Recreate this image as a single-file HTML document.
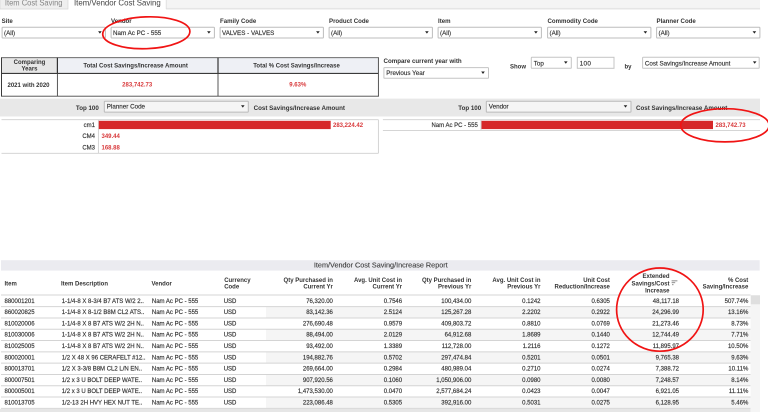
<!DOCTYPE html>
<html lang="en"><head><meta charset="utf-8"><title>Item/Vendor Cost Saving</title>
<style>
html,body{margin:0;padding:0;background:#fff;overflow:hidden;width:768px;height:412px}
#wrap{position:absolute;left:0;top:0;width:768px;height:412px;overflow:hidden;background:#fff}
#stage{position:absolute;left:0;top:0;width:1538px;height:826px;transform:translate(-0.5px,-0.5px) scale(0.5);transform-origin:0 0;will-change:transform;background:#fff}
svg{position:absolute;left:1px;top:1px}
svg{display:block;font-family:'Liberation Sans',Arial,sans-serif}
text{white-space:pre}
</style></head><body>
<div id="wrap"><div id="stage">
<svg width="1536" height="824" viewBox="0 0 768 412">
<rect x="0" y="0" width="760" height="9.2" fill="#f4f4f4"/>
<line x1="166" y1="8.7" x2="760" y2="8.7" stroke="#e5e5e5" stroke-width="1.7"/>
<rect x="0" y="-1" width="68" height="10" fill="#efefef" stroke="#d8d8d8" stroke-width="0.8"/>
<rect x="68.4" y="-1" width="97.6" height="10.5" fill="#fff"/>
<line x1="166.2" y1="0" x2="166.2" y2="9" stroke="#dcdcdc" stroke-width="0.8"/>
<text x="4.9" y="5.7" font-size="8" fill="#858585" textLength="57.6" lengthAdjust="spacingAndGlyphs">Item Cost Saving</text>
<text x="74" y="5.7" font-size="8" fill="#444" textLength="86.7" lengthAdjust="spacingAndGlyphs">Item/Vendor Cost Saving</text>
<text x="1.6" y="23" font-size="6.1" font-weight="700" fill="#333">Site</text>
<rect x="2.1" y="27.3" width="103.3" height="10.7" fill="#fff" stroke="#bcbcbc" stroke-width="1" rx="0.6"/>
<text x="4.0" y="34.75" font-size="6.25" stroke="#333" stroke-width="0.16" fill="#333">(All)</text>
<path d="M98.10 31.25h3.6l-1.80 2.4z" fill="#222"/>
<text x="111" y="23" font-size="6.1" font-weight="700" fill="#333">Vendor</text>
<rect x="111.1" y="27.3" width="103.3" height="10.7" fill="#fff" stroke="#bcbcbc" stroke-width="1" rx="0.6"/>
<text x="113.0" y="34.75" font-size="6.25" stroke="#333" stroke-width="0.16" fill="#333">Nam Ac PC - 555</text>
<path d="M207.10 31.25h3.6l-1.80 2.4z" fill="#222"/>
<text x="220" y="23" font-size="6.1" font-weight="700" fill="#333">Family Code</text>
<rect x="220.1" y="27.3" width="103.3" height="10.7" fill="#fff" stroke="#bcbcbc" stroke-width="1" rx="0.6"/>
<text x="222.0" y="34.75" font-size="6.25" stroke="#333" stroke-width="0.16" fill="#333">VALVES - VALVES</text>
<path d="M316.10 31.25h3.6l-1.80 2.4z" fill="#222"/>
<text x="329" y="23" font-size="6.1" font-weight="700" fill="#333">Product Code</text>
<rect x="329.1" y="27.3" width="103.3" height="10.7" fill="#fff" stroke="#bcbcbc" stroke-width="1" rx="0.6"/>
<text x="331.0" y="34.75" font-size="6.25" stroke="#333" stroke-width="0.16" fill="#333">(All)</text>
<path d="M425.10 31.25h3.6l-1.80 2.4z" fill="#222"/>
<text x="438" y="23" font-size="6.1" font-weight="700" fill="#333">Item</text>
<rect x="438.1" y="27.3" width="103.3" height="10.7" fill="#fff" stroke="#bcbcbc" stroke-width="1" rx="0.6"/>
<text x="440.0" y="34.75" font-size="6.25" stroke="#333" stroke-width="0.16" fill="#333">(All)</text>
<path d="M534.10 31.25h3.6l-1.80 2.4z" fill="#222"/>
<text x="547.5" y="23" font-size="6.1" font-weight="700" fill="#333">Commodity Code</text>
<rect x="547.6" y="27.3" width="103.3" height="10.7" fill="#fff" stroke="#bcbcbc" stroke-width="1" rx="0.6"/>
<text x="549.5" y="34.75" font-size="6.25" stroke="#333" stroke-width="0.16" fill="#333">(All)</text>
<path d="M643.60 31.25h3.6l-1.80 2.4z" fill="#222"/>
<text x="656.5" y="23" font-size="6.1" font-weight="700" fill="#333">Planner Code</text>
<rect x="656.6" y="27.3" width="103.3" height="10.7" fill="#fff" stroke="#bcbcbc" stroke-width="1" rx="0.6"/>
<text x="658.5" y="34.75" font-size="6.25" stroke="#333" stroke-width="0.16" fill="#333">(All)</text>
<path d="M752.60 31.25h3.6l-1.80 2.4z" fill="#222"/>
<rect x="1.5" y="57.5" width="376.9" height="38.5" fill="#fff"/>
<rect x="1.5" y="57.5" width="56" height="16" fill="#e7e7e7"/>
<rect x="57.5" y="57.5" width="320.9" height="16" fill="#eef0f5"/>
<line x1="1" y1="57.7" x2="378.9" y2="57.7" stroke="#555" stroke-width="0.8"/>
<line x1="1" y1="96.2" x2="378.9" y2="96.2" stroke="#444" stroke-width="0.9"/>
<line x1="1.5" y1="57.5" x2="1.5" y2="96.5" stroke="#3a3a3a" stroke-width="1"/>
<line x1="378.4" y1="57.5" x2="378.4" y2="96.5" stroke="#444" stroke-width="0.9"/>
<line x1="57.4" y1="57.5" x2="57.4" y2="73.3" stroke="#333" stroke-width="1.2"/>
<line x1="57.4" y1="73.3" x2="57.4" y2="96.2" stroke="#444" stroke-width="0.9"/>
<line x1="218" y1="57.5" x2="218" y2="73.3" stroke="#333" stroke-width="1.2"/>
<line x1="218" y1="73.3" x2="218" y2="96.2" stroke="#444" stroke-width="0.9"/>
<line x1="1.5" y1="73.4" x2="378.4" y2="73.4" stroke="#3a3a3a" stroke-width="1.1"/>
<text x="29.5" y="64" font-size="6" font-weight="700" text-anchor="middle" fill="#333">Comparing</text>
<text x="29.5" y="70.6" font-size="6" font-weight="700" text-anchor="middle" fill="#333">Years</text>
<text x="28.5" y="86.8" font-size="6" font-weight="700" text-anchor="middle" fill="#333">2021 with 2020</text>
<text x="135.6" y="67.6" font-size="6.05" font-weight="700" text-anchor="middle" fill="#333">Total Cost Savings/Increase Amount</text>
<text x="296.5" y="67.6" font-size="6" font-weight="700" text-anchor="middle" fill="#333">Total % Cost Savings/Increase</text>
<text x="137.2" y="86.7" font-size="6" font-weight="700" text-anchor="middle" fill="#d8393b">283,742.73</text>
<text x="297.8" y="86.7" font-size="6" font-weight="700" text-anchor="middle" fill="#d8393b">9.63%</text>
<text x="383.5" y="63.1" font-size="6.18" font-weight="700" fill="#333">Compare current year with</text>
<rect x="383.9" y="67.6" width="104.6" height="10.7" fill="#fff" stroke="#c4c4c4" stroke-width="1" rx="0.6"/>
<text x="386.2" y="74.8" font-size="6.25" stroke="#333" stroke-width="0.16" fill="#333">Previous Year</text>
<path d="M481.20 71.55h3.6l-1.80 2.4z" fill="#222"/>
<text x="510" y="68.5" font-size="6" font-weight="700" fill="#333">Show</text>
<rect x="531.3" y="57.3" width="40" height="11" fill="#fff" stroke="#c4c4c4" stroke-width="1" rx="0.6"/>
<text x="533.8" y="65.5" font-size="6.25" stroke="#333" stroke-width="0.16" fill="#333">Top</text>
<path d="M564.00 61.40h3.6l-1.80 2.4z" fill="#222"/>
<rect x="577.3" y="57.3" width="36.7" height="11" fill="#fff" stroke="#c4c4c4" stroke-width="1"/>
<text x="579.6" y="65.5" font-size="6.4" stroke="#333" stroke-width="0.16" fill="#333" letter-spacing="0.35">100</text>
<text x="624.5" y="68.5" font-size="6" font-weight="700" fill="#333">by</text>
<rect x="642.6" y="57.3" width="116.6" height="11" fill="#fff" stroke="#c4c4c4" stroke-width="1" rx="0.6"/>
<text x="644.9" y="65.5" font-size="6.25" stroke="#333" stroke-width="0.16" fill="#333">Cost Savings/Increase Amount</text>
<path d="M752.90 61.40h3.6l-1.80 2.4z" fill="#222"/>
<rect x="0" y="98.6" width="760" height="17.9" fill="#e8e8e8"/>
<text x="98.8" y="110.1" font-size="6.2" font-weight="700" text-anchor="end" fill="#333">Top 100</text>
<rect x="104.3" y="101.2" width="144" height="10.9" fill="#f5f5f5" stroke="#b9b9b9" stroke-width="1" rx="0.6"/>
<text x="106.8" y="108.7" font-size="6.25" stroke="#333" stroke-width="0.16" fill="#333">Planner Code</text>
<path d="M241.00 105.25h3.6l-1.80 2.4z" fill="#222"/>
<text x="253.6" y="110.1" font-size="6.22" font-weight="700" fill="#333">Cost Savings/Increase Amount</text>
<text x="481.2" y="110.1" font-size="6.2" font-weight="700" text-anchor="end" fill="#333">Top 100</text>
<rect x="486.3" y="101.2" width="144.7" height="10.9" fill="#f5f5f5" stroke="#b9b9b9" stroke-width="1" rx="0.6"/>
<text x="488.8" y="108.7" font-size="6.25" stroke="#333" stroke-width="0.16" fill="#333">Vendor</text>
<path d="M623.70 105.25h3.6l-1.80 2.4z" fill="#222"/>
<text x="636" y="110.1" font-size="6.22" font-weight="700" fill="#333">Cost Savings/Increase Amount</text>
<line x1="1.5" y1="119.7" x2="378.4" y2="119.7" stroke="#cfcfcf" stroke-width="0.9"/>
<line x1="1.5" y1="153.3" x2="378.4" y2="153.3" stroke="#cfcfcf" stroke-width="0.9"/>
<line x1="378.4" y1="119.7" x2="378.4" y2="153.3" stroke="#cfcfcf" stroke-width="0.9"/>
<line x1="98.4" y1="119.7" x2="98.4" y2="153.3" stroke="#cfcfcf" stroke-width="0.9"/>
<rect x="98.8" y="120.8" width="231.9" height="8.3" fill="#d62728"/>
<text x="95" y="127.1" font-size="6" stroke="#333" stroke-width="0.16" text-anchor="end" fill="#333">cm1</text>
<text x="95" y="138.1" font-size="6" stroke="#333" stroke-width="0.16" text-anchor="end" fill="#333">CM4</text>
<text x="95" y="149.6" font-size="6" stroke="#333" stroke-width="0.16" text-anchor="end" fill="#333">CM3</text>
<text x="333" y="127.1" font-size="6" font-weight="700" fill="#d8393b">283,224.42</text>
<text x="101.5" y="138.1" font-size="6" font-weight="700" fill="#d8393b">349.44</text>
<text x="101.5" y="149.6" font-size="6" font-weight="700" fill="#d8393b">168.88</text>
<line x1="382.9" y1="119.7" x2="760" y2="119.7" stroke="#cfcfcf" stroke-width="0.9"/>
<line x1="382.9" y1="130.4" x2="760" y2="130.4" stroke="#cfcfcf" stroke-width="0.9"/>
<line x1="481" y1="119.7" x2="481" y2="130.4" stroke="#cfcfcf" stroke-width="0.9"/>
<rect x="481.5" y="120.8" width="231.5" height="8.3" fill="#d62728"/>
<text x="477.8" y="127.1" font-size="6" stroke="#333" stroke-width="0.16" text-anchor="end" fill="#333">Nam Ac PC - 555</text>
<text x="715.5" y="127.1" font-size="6" font-weight="700" fill="#d8393b">283,742.73</text>
<rect x="1" y="260.2" width="758.7" height="10.4" fill="#ebebf0"/>
<text x="380.8" y="267.7" font-size="7.25" text-anchor="middle" fill="#3a3a3a" stroke="#3a3a3a" stroke-width="0.1">Item/Vendor Cost Saving/Increase Report</text>
<rect x="266" y="306.65000000000003" width="484.5" height="11.3" fill="#f5f5f5"/>
<rect x="266" y="329.25" width="484.5" height="11.3" fill="#f5f5f5"/>
<rect x="266" y="351.85" width="484.5" height="11.3" fill="#f5f5f5"/>
<rect x="266" y="374.45000000000005" width="484.5" height="11.3" fill="#f5f5f5"/>
<rect x="266" y="397.05" width="484.5" height="11.3" fill="#f5f5f5"/>
<rect x="750.6" y="295.3" width="9.4" height="117" fill="#f5f5f5"/>
<rect x="750.8" y="295.3" width="9.2" height="9" fill="#dfdfdf"/>
<line x1="1" y1="295.0" x2="750.5" y2="295.0" stroke="#d4d4d4" stroke-width="1"/>
<line x1="1" y1="306.65000000000003" x2="750.5" y2="306.65000000000003" stroke="#d4d4d4" stroke-width="1"/>
<line x1="1" y1="317.95000000000005" x2="750.5" y2="317.95000000000005" stroke="#d4d4d4" stroke-width="1"/>
<line x1="1" y1="329.25" x2="750.5" y2="329.25" stroke="#d4d4d4" stroke-width="1"/>
<line x1="1" y1="340.55" x2="750.5" y2="340.55" stroke="#d4d4d4" stroke-width="1"/>
<line x1="1" y1="351.85" x2="750.5" y2="351.85" stroke="#d4d4d4" stroke-width="1"/>
<line x1="1" y1="363.15000000000003" x2="750.5" y2="363.15000000000003" stroke="#d4d4d4" stroke-width="1"/>
<line x1="1" y1="374.45000000000005" x2="750.5" y2="374.45000000000005" stroke="#d4d4d4" stroke-width="1"/>
<line x1="1" y1="385.75" x2="750.5" y2="385.75" stroke="#d4d4d4" stroke-width="1"/>
<line x1="1" y1="397.05" x2="750.5" y2="397.05" stroke="#d4d4d4" stroke-width="1"/>
<line x1="1" y1="408.35" x2="750.5" y2="408.35" stroke="#d4d4d4" stroke-width="1"/>
<rect x="0" y="408.8" width="750.5" height="4" fill="#e6e6e6"/>
<text x="4.5" y="285.4" font-size="6" font-weight="700" fill="#333">Item</text>
<text x="61" y="285.4" font-size="6" font-weight="700" fill="#333">Item Description</text>
<text x="151.5" y="285.4" font-size="6" font-weight="700" fill="#333">Vendor</text>
<text x="224.2" y="281.8" font-size="6" font-weight="700" fill="#333">Currency</text>
<text x="224.2" y="288.5" font-size="6" font-weight="700" fill="#333">Code</text>
<text x="332.9" y="281.8" font-size="6" font-weight="700" text-anchor="end" fill="#333">Qty Purchased in</text>
<text x="332.9" y="288.5" font-size="6" font-weight="700" text-anchor="end" fill="#333">Current Yr</text>
<text x="402.1" y="281.8" font-size="6" font-weight="700" text-anchor="end" fill="#333">Avg. Unit Cost in</text>
<text x="402.1" y="288.5" font-size="6" font-weight="700" text-anchor="end" fill="#333">Current Yr</text>
<text x="471.3" y="281.8" font-size="6" font-weight="700" text-anchor="end" fill="#333">Qty Purchased in</text>
<text x="471.3" y="288.5" font-size="6" font-weight="700" text-anchor="end" fill="#333">Previous Yr</text>
<text x="540.5" y="281.8" font-size="6" font-weight="700" text-anchor="end" fill="#333">Avg. Unit Cost in</text>
<text x="540.5" y="288.5" font-size="6" font-weight="700" text-anchor="end" fill="#333">Previous Yr</text>
<text x="609.9" y="281.8" font-size="6" font-weight="700" text-anchor="end" fill="#333">Unit Cost</text>
<text x="609.9" y="288.5" font-size="6" font-weight="700" text-anchor="end" fill="#333">Reduction/Increase</text>
<text x="748.3" y="281.8" font-size="6" font-weight="700" text-anchor="end" fill="#333">% Cost</text>
<text x="748.3" y="288.5" font-size="6" font-weight="700" text-anchor="end" fill="#333">Saving/Increase</text>
<text x="669.5" y="278.2" font-size="6" font-weight="700" text-anchor="end" fill="#333">Extended</text>
<text x="669.5" y="285.4" font-size="6" font-weight="700" text-anchor="end" fill="#333">Savings/Cost</text>
<text x="669.5" y="292.6" font-size="6" font-weight="700" text-anchor="end" fill="#333">Increase</text>
<path d="M671.6 280.9h5.8M671.6 282.8h3.6M672 284.7h1.5" stroke="#666" stroke-width="0.75" fill="none"/>
<text x="4.5" y="302.8" font-size="6" stroke="#333" stroke-width="0.16" fill="#333">880001201</text>
<text x="61.7" y="302.8" font-size="6" stroke="#333" stroke-width="0.16" fill="#333">1-1/4-8 X 8-3/4 B7 ATS W/2 2..</text>
<text x="151.9" y="302.8" font-size="6" stroke="#333" stroke-width="0.16" fill="#333">Nam Ac PC - 555</text>
<text x="223.7" y="302.8" font-size="6" stroke="#333" stroke-width="0.16" fill="#333">USD</text>
<text x="332.9" y="302.8" font-size="6" stroke="#333" stroke-width="0.16" text-anchor="end" fill="#333">76,320.00</text>
<text x="402.1" y="302.8" font-size="6" stroke="#333" stroke-width="0.16" text-anchor="end" fill="#333">0.7546</text>
<text x="471.3" y="302.8" font-size="6" stroke="#333" stroke-width="0.16" text-anchor="end" fill="#333">100,434.00</text>
<text x="540.5" y="302.8" font-size="6" stroke="#333" stroke-width="0.16" text-anchor="end" fill="#333">0.1242</text>
<text x="609.9" y="302.8" font-size="6" stroke="#333" stroke-width="0.16" text-anchor="end" fill="#333">0.6305</text>
<text x="679.0" y="302.8" font-size="6" stroke="#333" stroke-width="0.16" text-anchor="end" fill="#333">48,117.18</text>
<text x="748.3" y="302.8" font-size="6" stroke="#333" stroke-width="0.16" text-anchor="end" fill="#333">507.74%</text>
<text x="4.5" y="314.1" font-size="6" stroke="#333" stroke-width="0.16" fill="#333">860020825</text>
<text x="61.7" y="314.1" font-size="6" stroke="#333" stroke-width="0.16" fill="#333">1-1/4-8 X 8-1/2 B8M CL2 ATS..</text>
<text x="151.9" y="314.1" font-size="6" stroke="#333" stroke-width="0.16" fill="#333">Nam Ac PC - 555</text>
<text x="223.7" y="314.1" font-size="6" stroke="#333" stroke-width="0.16" fill="#333">USD</text>
<text x="332.9" y="314.1" font-size="6" stroke="#333" stroke-width="0.16" text-anchor="end" fill="#333">83,142.36</text>
<text x="402.1" y="314.1" font-size="6" stroke="#333" stroke-width="0.16" text-anchor="end" fill="#333">2.5124</text>
<text x="471.3" y="314.1" font-size="6" stroke="#333" stroke-width="0.16" text-anchor="end" fill="#333">125,267.28</text>
<text x="540.5" y="314.1" font-size="6" stroke="#333" stroke-width="0.16" text-anchor="end" fill="#333">2.2202</text>
<text x="609.9" y="314.1" font-size="6" stroke="#333" stroke-width="0.16" text-anchor="end" fill="#333">0.2922</text>
<text x="679.0" y="314.1" font-size="6" stroke="#333" stroke-width="0.16" text-anchor="end" fill="#333">24,296.99</text>
<text x="748.3" y="314.1" font-size="6" stroke="#333" stroke-width="0.16" text-anchor="end" fill="#333">13.16%</text>
<text x="4.5" y="325.4" font-size="6" stroke="#333" stroke-width="0.16" fill="#333">810020006</text>
<text x="61.7" y="325.4" font-size="6" stroke="#333" stroke-width="0.16" fill="#333">1-1/4-8 X 8 B7 ATS W/2 2H N..</text>
<text x="151.9" y="325.4" font-size="6" stroke="#333" stroke-width="0.16" fill="#333">Nam Ac PC - 555</text>
<text x="223.7" y="325.4" font-size="6" stroke="#333" stroke-width="0.16" fill="#333">USD</text>
<text x="332.9" y="325.4" font-size="6" stroke="#333" stroke-width="0.16" text-anchor="end" fill="#333">276,690.48</text>
<text x="402.1" y="325.4" font-size="6" stroke="#333" stroke-width="0.16" text-anchor="end" fill="#333">0.9579</text>
<text x="471.3" y="325.4" font-size="6" stroke="#333" stroke-width="0.16" text-anchor="end" fill="#333">409,803.72</text>
<text x="540.5" y="325.4" font-size="6" stroke="#333" stroke-width="0.16" text-anchor="end" fill="#333">0.8810</text>
<text x="609.9" y="325.4" font-size="6" stroke="#333" stroke-width="0.16" text-anchor="end" fill="#333">0.0769</text>
<text x="679.0" y="325.4" font-size="6" stroke="#333" stroke-width="0.16" text-anchor="end" fill="#333">21,273.46</text>
<text x="748.3" y="325.4" font-size="6" stroke="#333" stroke-width="0.16" text-anchor="end" fill="#333">8.73%</text>
<text x="4.5" y="336.7" font-size="6" stroke="#333" stroke-width="0.16" fill="#333">810030006</text>
<text x="61.7" y="336.7" font-size="6" stroke="#333" stroke-width="0.16" fill="#333">1-1/4-8 X 8 B7 ATS W/2 2H N..</text>
<text x="151.9" y="336.7" font-size="6" stroke="#333" stroke-width="0.16" fill="#333">Nam Ac PC - 555</text>
<text x="223.7" y="336.7" font-size="6" stroke="#333" stroke-width="0.16" fill="#333">USD</text>
<text x="332.9" y="336.7" font-size="6" stroke="#333" stroke-width="0.16" text-anchor="end" fill="#333">88,494.00</text>
<text x="402.1" y="336.7" font-size="6" stroke="#333" stroke-width="0.16" text-anchor="end" fill="#333">2.0129</text>
<text x="471.3" y="336.7" font-size="6" stroke="#333" stroke-width="0.16" text-anchor="end" fill="#333">64,912.68</text>
<text x="540.5" y="336.7" font-size="6" stroke="#333" stroke-width="0.16" text-anchor="end" fill="#333">1.8689</text>
<text x="609.9" y="336.7" font-size="6" stroke="#333" stroke-width="0.16" text-anchor="end" fill="#333">0.1440</text>
<text x="679.0" y="336.7" font-size="6" stroke="#333" stroke-width="0.16" text-anchor="end" fill="#333">12,744.49</text>
<text x="748.3" y="336.7" font-size="6" stroke="#333" stroke-width="0.16" text-anchor="end" fill="#333">7.71%</text>
<text x="4.5" y="348.0" font-size="6" stroke="#333" stroke-width="0.16" fill="#333">810025005</text>
<text x="61.7" y="348.0" font-size="6" stroke="#333" stroke-width="0.16" fill="#333">1-1/4-8 X 8 B7 ATS W/2 2H N..</text>
<text x="151.9" y="348.0" font-size="6" stroke="#333" stroke-width="0.16" fill="#333">Nam Ac PC - 555</text>
<text x="223.7" y="348.0" font-size="6" stroke="#333" stroke-width="0.16" fill="#333">USD</text>
<text x="332.9" y="348.0" font-size="6" stroke="#333" stroke-width="0.16" text-anchor="end" fill="#333">93,492.00</text>
<text x="402.1" y="348.0" font-size="6" stroke="#333" stroke-width="0.16" text-anchor="end" fill="#333">1.3389</text>
<text x="471.3" y="348.0" font-size="6" stroke="#333" stroke-width="0.16" text-anchor="end" fill="#333">112,728.00</text>
<text x="540.5" y="348.0" font-size="6" stroke="#333" stroke-width="0.16" text-anchor="end" fill="#333">1.2116</text>
<text x="609.9" y="348.0" font-size="6" stroke="#333" stroke-width="0.16" text-anchor="end" fill="#333">0.1272</text>
<text x="679.0" y="348.0" font-size="6" stroke="#333" stroke-width="0.16" text-anchor="end" fill="#333">11,895.97</text>
<text x="748.3" y="348.0" font-size="6" stroke="#333" stroke-width="0.16" text-anchor="end" fill="#333">10.50%</text>
<text x="4.5" y="359.3" font-size="6" stroke="#333" stroke-width="0.16" fill="#333">800020001</text>
<text x="61.7" y="359.3" font-size="6" stroke="#333" stroke-width="0.16" fill="#333">1/2 X 48 X 96 CERAFELT #12..</text>
<text x="151.9" y="359.3" font-size="6" stroke="#333" stroke-width="0.16" fill="#333">Nam Ac PC - 555</text>
<text x="223.7" y="359.3" font-size="6" stroke="#333" stroke-width="0.16" fill="#333">USD</text>
<text x="332.9" y="359.3" font-size="6" stroke="#333" stroke-width="0.16" text-anchor="end" fill="#333">194,882.76</text>
<text x="402.1" y="359.3" font-size="6" stroke="#333" stroke-width="0.16" text-anchor="end" fill="#333">0.5702</text>
<text x="471.3" y="359.3" font-size="6" stroke="#333" stroke-width="0.16" text-anchor="end" fill="#333">297,474.84</text>
<text x="540.5" y="359.3" font-size="6" stroke="#333" stroke-width="0.16" text-anchor="end" fill="#333">0.5201</text>
<text x="609.9" y="359.3" font-size="6" stroke="#333" stroke-width="0.16" text-anchor="end" fill="#333">0.0501</text>
<text x="679.0" y="359.3" font-size="6" stroke="#333" stroke-width="0.16" text-anchor="end" fill="#333">9,765.38</text>
<text x="748.3" y="359.3" font-size="6" stroke="#333" stroke-width="0.16" text-anchor="end" fill="#333">9.63%</text>
<text x="4.5" y="370.6" font-size="6" stroke="#333" stroke-width="0.16" fill="#333">800013701</text>
<text x="61.7" y="370.6" font-size="6" stroke="#333" stroke-width="0.16" fill="#333">1/2 X 3-3/8 B8M CL2 L/N EN..</text>
<text x="151.9" y="370.6" font-size="6" stroke="#333" stroke-width="0.16" fill="#333">Nam Ac PC - 555</text>
<text x="223.7" y="370.6" font-size="6" stroke="#333" stroke-width="0.16" fill="#333">USD</text>
<text x="332.9" y="370.6" font-size="6" stroke="#333" stroke-width="0.16" text-anchor="end" fill="#333">269,664.00</text>
<text x="402.1" y="370.6" font-size="6" stroke="#333" stroke-width="0.16" text-anchor="end" fill="#333">0.2984</text>
<text x="471.3" y="370.6" font-size="6" stroke="#333" stroke-width="0.16" text-anchor="end" fill="#333">480,989.04</text>
<text x="540.5" y="370.6" font-size="6" stroke="#333" stroke-width="0.16" text-anchor="end" fill="#333">0.2710</text>
<text x="609.9" y="370.6" font-size="6" stroke="#333" stroke-width="0.16" text-anchor="end" fill="#333">0.0274</text>
<text x="679.0" y="370.6" font-size="6" stroke="#333" stroke-width="0.16" text-anchor="end" fill="#333">7,388.72</text>
<text x="748.3" y="370.6" font-size="6" stroke="#333" stroke-width="0.16" text-anchor="end" fill="#333">10.11%</text>
<text x="4.5" y="381.9" font-size="6" stroke="#333" stroke-width="0.16" fill="#333">800007501</text>
<text x="61.7" y="381.9" font-size="6" stroke="#333" stroke-width="0.16" fill="#333">1/2 x 3 U BOLT DEEP WATE..</text>
<text x="151.9" y="381.9" font-size="6" stroke="#333" stroke-width="0.16" fill="#333">Nam Ac PC - 555</text>
<text x="223.7" y="381.9" font-size="6" stroke="#333" stroke-width="0.16" fill="#333">USD</text>
<text x="332.9" y="381.9" font-size="6" stroke="#333" stroke-width="0.16" text-anchor="end" fill="#333">907,920.56</text>
<text x="402.1" y="381.9" font-size="6" stroke="#333" stroke-width="0.16" text-anchor="end" fill="#333">0.1060</text>
<text x="471.3" y="381.9" font-size="6" stroke="#333" stroke-width="0.16" text-anchor="end" fill="#333">1,050,906.00</text>
<text x="540.5" y="381.9" font-size="6" stroke="#333" stroke-width="0.16" text-anchor="end" fill="#333">0.0980</text>
<text x="609.9" y="381.9" font-size="6" stroke="#333" stroke-width="0.16" text-anchor="end" fill="#333">0.0080</text>
<text x="679.0" y="381.9" font-size="6" stroke="#333" stroke-width="0.16" text-anchor="end" fill="#333">7,248.57</text>
<text x="748.3" y="381.9" font-size="6" stroke="#333" stroke-width="0.16" text-anchor="end" fill="#333">8.14%</text>
<text x="4.5" y="393.2" font-size="6" stroke="#333" stroke-width="0.16" fill="#333">800005001</text>
<text x="61.7" y="393.2" font-size="6" stroke="#333" stroke-width="0.16" fill="#333">1/2 x 3 U BOLT DEEP WATE..</text>
<text x="151.9" y="393.2" font-size="6" stroke="#333" stroke-width="0.16" fill="#333">Nam Ac PC - 555</text>
<text x="223.7" y="393.2" font-size="6" stroke="#333" stroke-width="0.16" fill="#333">USD</text>
<text x="332.9" y="393.2" font-size="6" stroke="#333" stroke-width="0.16" text-anchor="end" fill="#333">1,473,530.00</text>
<text x="402.1" y="393.2" font-size="6" stroke="#333" stroke-width="0.16" text-anchor="end" fill="#333">0.0470</text>
<text x="471.3" y="393.2" font-size="6" stroke="#333" stroke-width="0.16" text-anchor="end" fill="#333">2,577,684.24</text>
<text x="540.5" y="393.2" font-size="6" stroke="#333" stroke-width="0.16" text-anchor="end" fill="#333">0.0423</text>
<text x="609.9" y="393.2" font-size="6" stroke="#333" stroke-width="0.16" text-anchor="end" fill="#333">0.0047</text>
<text x="679.0" y="393.2" font-size="6" stroke="#333" stroke-width="0.16" text-anchor="end" fill="#333">6,921.05</text>
<text x="748.3" y="393.2" font-size="6" stroke="#333" stroke-width="0.16" text-anchor="end" fill="#333">11.11%</text>
<text x="4.5" y="404.5" font-size="6" stroke="#333" stroke-width="0.16" fill="#333">810013705</text>
<text x="61.7" y="404.5" font-size="6" stroke="#333" stroke-width="0.16" fill="#333">1/2-13 2H HVY HEX NUT TE..</text>
<text x="151.9" y="404.5" font-size="6" stroke="#333" stroke-width="0.16" fill="#333">Nam Ac PC - 555</text>
<text x="223.7" y="404.5" font-size="6" stroke="#333" stroke-width="0.16" fill="#333">USD</text>
<text x="332.9" y="404.5" font-size="6" stroke="#333" stroke-width="0.16" text-anchor="end" fill="#333">223,086.48</text>
<text x="402.1" y="404.5" font-size="6" stroke="#333" stroke-width="0.16" text-anchor="end" fill="#333">0.5305</text>
<text x="471.3" y="404.5" font-size="6" stroke="#333" stroke-width="0.16" text-anchor="end" fill="#333">392,916.00</text>
<text x="540.5" y="404.5" font-size="6" stroke="#333" stroke-width="0.16" text-anchor="end" fill="#333">0.5031</text>
<text x="609.9" y="404.5" font-size="6" stroke="#333" stroke-width="0.16" text-anchor="end" fill="#333">0.0275</text>
<text x="679.0" y="404.5" font-size="6" stroke="#333" stroke-width="0.16" text-anchor="end" fill="#333">6,128.95</text>
<text x="748.3" y="404.5" font-size="6" stroke="#333" stroke-width="0.16" text-anchor="end" fill="#333">5.46%</text>
<ellipse cx="146.3" cy="32.8" rx="43.6" ry="15.9" fill="none" stroke="#f01414" stroke-width="1.7" transform="rotate(-2 146.3 32.8)"/>
<ellipse cx="724.9" cy="125.3" rx="44.2" ry="16.6" fill="none" stroke="#f01414" stroke-width="1.7"/>
<ellipse cx="659.9" cy="309.6" rx="43.3" ry="41.6" fill="none" stroke="#f01414" stroke-width="1.7"/>
</svg>
</div></div>
</body></html>
